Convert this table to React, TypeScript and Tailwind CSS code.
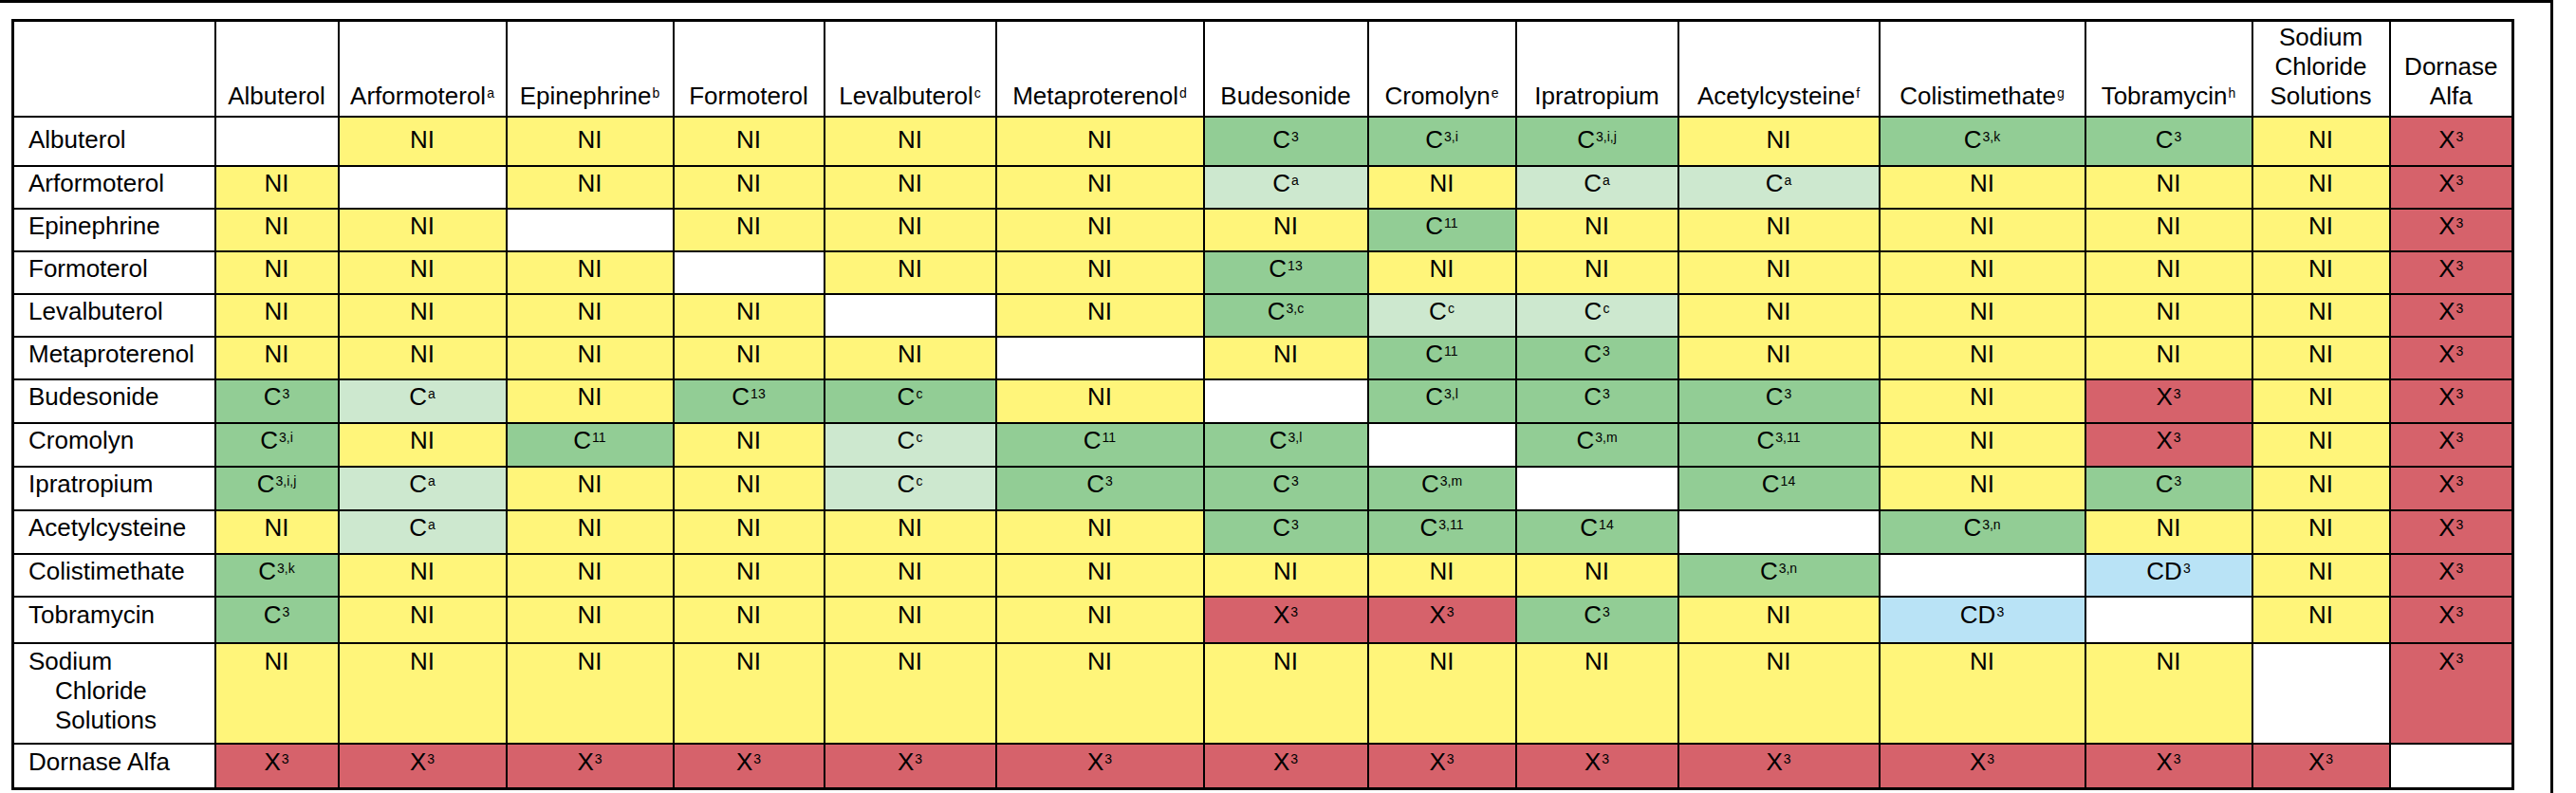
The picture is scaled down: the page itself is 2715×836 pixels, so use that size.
import type { ReactNode } from "react";

type Tone = "y" | "g" | "l" | "r" | "b" | "w";

const toneClass: Record<Tone, string> = {
  y: "bg-[#fff57a]",
  g: "bg-[#92cd95]",
  l: "bg-[#cde8cf]",
  r: "bg-[#d6626b]",
  b: "bg-[#b9e3f6]",
  w: "bg-white",
};

// column widths measured off the reference (px)
const widths = [213, 130, 177, 176, 159, 181, 219, 173, 156, 171, 212, 217, 176, 145, 130];

const headers: Array<{ name: ReactNode; sup?: string }> = [
  { name: "Albuterol" },
  { name: "Arformoterol", sup: "a" },
  { name: "Epinephrine", sup: "b" },
  { name: "Formoterol" },
  { name: "Levalbuterol", sup: "c" },
  { name: "Metaproterenol", sup: "d" },
  { name: "Budesonide" },
  { name: "Cromolyn", sup: "e" },
  { name: "Ipratropium" },
  { name: "Acetylcysteine", sup: "f" },
  { name: "Colistimethate", sup: "g" },
  { name: "Tobramycin", sup: "h" },
  {
    name: (
      <>
        Sodium
        <br />
        Chloride
        <br />
        Solutions
      </>
    ),
  },
  {
    name: (
      <>
        Dornase
        <br />
        Alfa
      </>
    ),
  },
];

const NI = "NI";
const X = "X";

const rows: Array<{ label: ReactNode; height: string; pad: string; cells: string[] }> = [
  {
    label: "Albuterol",
    height: "h-[52px]",
    pad: "pt-[8px]",
    cells: ["", NI, NI, NI, NI, NI, "g:3", "g:3,i", "g:3,i,j", NI, "g:3,k", "g:3", NI, X],
  },
  {
    label: "Arformoterol",
    height: "h-[45px]",
    pad: "pt-[2px]",
    cells: [NI, "", NI, NI, NI, NI, "l:a", NI, "l:a", "l:a", NI, NI, NI, X],
  },
  {
    label: "Epinephrine",
    height: "h-[45px]",
    pad: "pt-[2px]",
    cells: [NI, NI, "", NI, NI, NI, NI, "g:11", NI, NI, NI, NI, NI, X],
  },
  {
    label: "Formoterol",
    height: "h-[45px]",
    pad: "pt-[2px]",
    cells: [NI, NI, NI, "", NI, NI, "g:13", NI, NI, NI, NI, NI, NI, X],
  },
  {
    label: "Levalbuterol",
    height: "h-[45px]",
    pad: "pt-[2px]",
    cells: [NI, NI, NI, NI, "", NI, "g:3,c", "l:c", "l:c", NI, NI, NI, NI, X],
  },
  {
    label: "Metaproterenol",
    height: "h-[45px]",
    pad: "pt-[2px]",
    cells: [NI, NI, NI, NI, NI, "", NI, "g:11", "g:3", NI, NI, NI, NI, X],
  },
  {
    label: "Budesonide",
    height: "h-[46px]",
    pad: "pt-[2px]",
    cells: ["g:3", "l:a", NI, "g:13", "g:c", NI, "", "g:3,l", "g:3", "g:3", NI, X, NI, X],
  },
  {
    label: "Cromolyn",
    height: "h-[46px]",
    pad: "pt-[2px]",
    cells: ["g:3,i", NI, "g:11", NI, "l:c", "g:11", "g:3,l", "", "g:3,m", "g:3,11", NI, X, NI, X],
  },
  {
    label: "Ipratropium",
    height: "h-[46px]",
    pad: "pt-[2px]",
    cells: ["g:3,i,j", "l:a", NI, NI, "l:c", "g:3", "g:3", "g:3,m", "", "g:14", NI, "g:3", NI, X],
  },
  {
    label: "Acetylcysteine",
    height: "h-[46px]",
    pad: "pt-[2px]",
    cells: [NI, "l:a", NI, NI, NI, NI, "g:3", "g:3,11", "g:14", "", "g:3,n", NI, NI, X],
  },
  {
    label: "Colistimethate",
    height: "h-[45px]",
    pad: "pt-[2px]",
    cells: ["g:3,k", NI, NI, NI, NI, NI, NI, NI, NI, "g:3,n", "", "CD", NI, X],
  },
  {
    label: "Tobramycin",
    height: "h-[49px]",
    pad: "pt-[3px]",
    cells: ["g:3", NI, NI, NI, NI, NI, X, X, "g:3", NI, "CD", "", NI, X],
  },
  {
    label: (
      <span className="block pl-[28px] -indent-[28px]">
        Sodium
        <br />
        Chloride
        <br />
        Solutions
      </span>
    ),
    height: "h-[106px]",
    pad: "pt-[3px]",
    cells: [NI, NI, NI, NI, NI, NI, NI, NI, NI, NI, NI, NI, "", X],
  },
  {
    label: "Dornase Alfa",
    height: "h-[48px]",
    pad: "pt-[3px]",
    cells: [X, X, X, X, X, X, X, X, X, X, X, X, X, ""],
  },
];

function parseCell(code: string): { tone: Tone; main: string; sup: string } {
  if (code === "") return { tone: "w", main: "", sup: "" };
  if (code === NI) return { tone: "y", main: "NI", sup: "" };
  if (code === X) return { tone: "r", main: "X", sup: "3" };
  if (code === "CD") return { tone: "b", main: "CD", sup: "3" };
  const [tone, sup] = code.split(":");
  return { tone: tone as Tone, main: "C", sup };
}

function Sup({ children }: { children: ReactNode }) {
  return <span className="ml-px align-[7px] text-[14px] leading-none">{children}</span>;
}

export default function App() {
  return (
    <div
      className="h-[836px] w-[2715px] overflow-hidden bg-white text-black"
      style={{ fontFamily: '"Liberation Sans", Arial, Helvetica, sans-serif' }}
    >
      <div className="h-full w-[2691px] border-t-[3px] border-r-[3px] border-black pl-[12px] pt-[17px]">
        <table className="w-[2635px] table-fixed border-collapse border-[3px] border-black text-[26px] leading-[31px]">
          <colgroup>
            {widths.map((w, i) => (
              <col key={i} style={{ width: w }} />
            ))}
          </colgroup>
          <thead>
            <tr className="h-[101px]">
              <th className="border-2 border-black" />
              {headers.map((h, i) => (
                <th
                  key={i}
                  className="border-2 border-black px-1 pb-[5px] text-center align-bottom font-normal"
                >
                  {h.name}
                  {h.sup && <Sup>{h.sup}</Sup>}
                </th>
              ))}
            </tr>
          </thead>
          <tbody>
            {rows.map((row, r) => (
              <tr key={r} className={row.height}>
                <td className={`border-2 border-black pl-[15px] text-left align-top ${row.pad}`}>
                  {row.label}
                </td>
                {row.cells.map((code, c) => {
                  const cell = parseCell(code);
                  return (
                    <td
                      key={c}
                      className={`border-2 border-black text-center align-top ${row.pad} ${toneClass[cell.tone]}`}
                    >
                      {cell.main}
                      {cell.sup && <Sup>{cell.sup}</Sup>}
                    </td>
                  );
                })}
              </tr>
            ))}
          </tbody>
        </table>
      </div>
    </div>
  );
}
